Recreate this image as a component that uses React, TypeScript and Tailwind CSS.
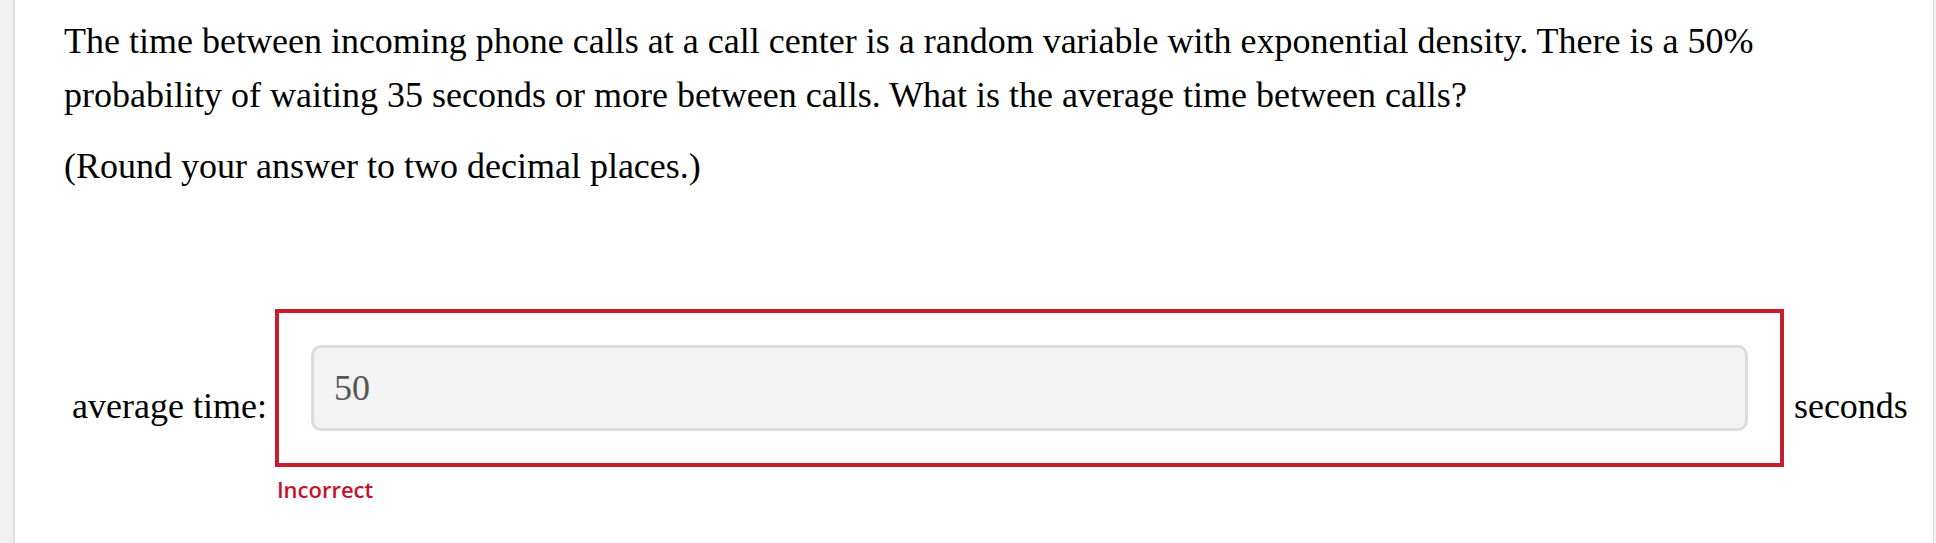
import React from "react";

export default function App() {
  const serif = { fontFamily: '"Liberation Serif", "Times New Roman", serif' };
  return (
    <div className="w-[1936px] h-[543px] flex bg-white overflow-hidden">
      <div className="w-[15px] h-full bg-[#f2f2f2] border-r-2 border-[#e0e0e0] shrink-0" />
      <div className="flex-1 pl-[49px] pt-[14px] text-black" style={serif}>
        <p className="w-[1760px] text-[36px] leading-[54px] mb-[17px]">
          The time between incoming phone calls at a call center is a random variable with exponential density. There is a 50% probability of waiting 35 seconds or more between calls. What is the average time between calls?
        </p>
        <p className="text-[36px] leading-[54px]">(Round your answer to two decimal places.)</p>
        <div className="flex items-start mt-[116px]">
          <span className="ml-[8px] mt-[70px] text-[36px] leading-[54px] whitespace-nowrap">average time:</span>
          <div className="flex flex-col ml-[8px]">
            <div className="w-[1509px] h-[158px] border-4 border-[#c41e2f] p-[32px]">
              <div className="h-[86px] w-full border-[3px] border-[#dcdcdc] rounded-[10px] bg-[#f3f3f3] pl-[20px] flex items-center">
                <span className="text-[36px] leading-[54px] text-[#555555]">50</span>
              </div>
            </div>
            <span
              className="mt-[8px] ml-[2px] text-[22px] leading-[28px] font-semibold text-[#c8102e]"
              style={{ fontFamily: '"Open Sans", "Noto Sans", sans-serif' }}
            >
              Incorrect
            </span>
          </div>
          <span className="ml-[10px] mt-[70px] text-[36px] leading-[54px] whitespace-nowrap">seconds</span>
        </div>
      </div>
      <div className="w-[3px] h-full bg-[#f2f2f2] border-l border-[#dddddd] shrink-0" />
    </div>
  );
}
